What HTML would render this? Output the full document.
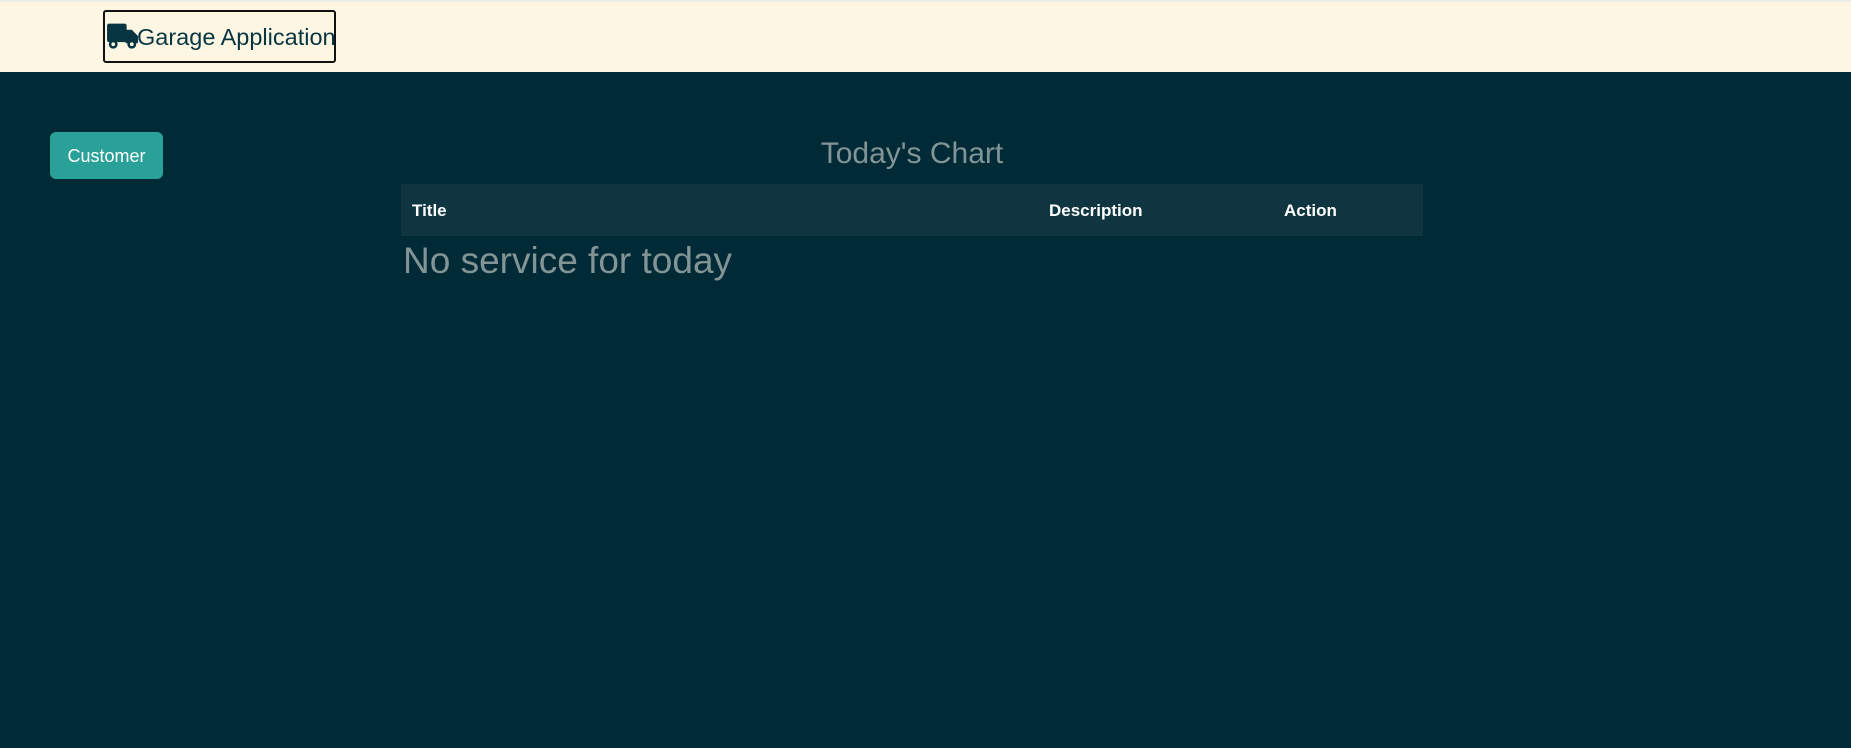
<!DOCTYPE html>
<html><head><meta charset="utf-8"><style>
*{margin:0;padding:0;box-sizing:border-box}
body{width:1851px;height:748px;background:#002b36;font-family:"Liberation Sans",sans-serif;overflow:hidden;position:relative}
.hdr{position:absolute;left:0;top:0;width:1851px;height:72px;background:#fdf6e3;border-top:2px solid #eee}
.brand{position:absolute;left:103px;top:8px;width:233px;height:53px;border:2px solid #111;border-radius:3px;color:#073642;font-size:23.5px;line-height:51px;padding-left:32px;white-space:nowrap}
.brand svg{position:absolute;left:1px;top:11px}
.btn{position:absolute;left:50px;top:132px;width:113px;height:47px;background:#2aa198;border-radius:6px;color:#fff;font-size:18px;line-height:49px;text-align:center}
.h{position:absolute;left:401px;width:1022px;top:135px;text-align:center;color:#839496;font-size:30px;line-height:38px}
.th{position:absolute;left:401px;top:184px;width:1022px;height:52px;background:#0f3640;color:#fff;font-weight:bold;font-size:17px;line-height:54px}
.th span{position:absolute;top:0}
.ns{position:absolute;left:403px;top:239px;color:#839496;font-size:37px;line-height:44px}
</style></head><body>
<div class="hdr"><div class="brand"><svg width="33" height="28" viewBox="0 0 32 26"><rect x="1" y="0" width="19" height="18" rx="2" fill="#073642"/><path d="M19 6h6l6 6v7H19z" fill="#073642"/><circle cx="7" cy="20" r="4.3" fill="#073642"/><circle cx="7" cy="20" r="1.8" fill="#fdf6e3"/><circle cx="25" cy="20" r="4.3" fill="#073642"/><circle cx="25" cy="20" r="1.8" fill="#fdf6e3"/></svg>Garage Application</div></div>
<div class="btn">Customer</div>
<div class="h">Today's Chart</div>
<div class="th"><span style="left:11px">Title</span><span style="left:648px">Description</span><span style="left:883px">Action</span></div>
<div class="ns">No service for today</div>
</body></html>
